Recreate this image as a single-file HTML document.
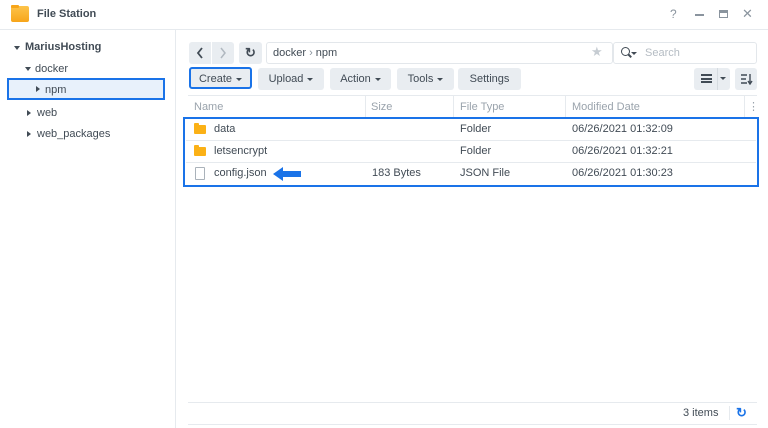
<!DOCTYPE html>
<html><head><style>
*{box-sizing:border-box;margin:0;padding:0}
body{width:768px;height:428px;background:#fff;font-family:"Liberation Sans",sans-serif;font-size:11px;color:#414b55;position:relative;overflow:hidden}
.a{position:absolute}
.btn{position:absolute;background:#e9edf1;border-radius:3px;height:22px;line-height:22px;text-align:center;font-size:11px;color:#414b55}
.car{display:inline-block;width:0;height:0;border-left:3px solid transparent;border-right:3px solid transparent;border-top:3px solid #414b55;vertical-align:middle;margin-left:4px}
.hl{position:absolute;height:1px;background:#e6eaee}
.vl{position:absolute;width:1px;background:#e6eaee}
.fold{position:absolute;width:12px;height:9px;background:#fbb116;border-radius:1px}
.fold:before{content:"";position:absolute;left:0;top:-2px;width:5px;height:3px;background:#fbb116;border-radius:1px 1px 0 0}
.tri{position:absolute;width:0;height:0}
</style></head><body>
<div class="a" style="left:11px;top:6px;width:18px;height:16px;background:linear-gradient(#fdc44a,#f7a51a);border-radius:2px"></div>
<div class="a" style="left:11px;top:5px;width:8px;height:3px;background:#f7a51a;border-radius:1px"></div>
<div class="a" style="left:37px;top:8px;font-weight:bold;font-size:11px;color:#414b55">File Station</div>
<div class="a" style="left:670px;top:7px;font-size:12px;color:#8a949e">?</div>
<div class="a" style="left:695px;top:14px;width:9px;height:2px;background:#8a949e"></div>
<div class="a" style="left:719px;top:10px;width:9px;height:8px;border:1.5px solid #8a949e;border-top-width:3px"></div>
<div class="a" style="left:742px;top:6px;font-size:13px;color:#8a949e">✕</div>
<div class="hl" style="left:0;top:29px;width:768px"></div>
<div class="vl" style="left:175px;top:30px;height:398px"></div>
<div class="tri" style="left:14px;top:46px;border-left:3px solid transparent;border-right:3px solid transparent;border-top:4px solid #414b55"></div>
<div class="a" style="left:25px;top:41px;font-weight:bold;color:#414b55">MariusHosting</div>
<div class="tri" style="left:25px;top:67px;border-left:3px solid transparent;border-right:3px solid transparent;border-top:4px solid #414b55"></div>
<div class="a" style="left:35px;top:63px">docker</div>
<div class="a" style="left:7px;top:78px;width:158px;height:22px;background:#e8f1fb;border:2px solid #1a73e8"></div>
<div class="tri" style="left:36px;top:86px;border-top:3px solid transparent;border-bottom:3px solid transparent;border-left:4px solid #414b55"></div>
<div class="a" style="left:45px;top:84px">npm</div>
<div class="tri" style="left:27px;top:110px;border-top:3px solid transparent;border-bottom:3px solid transparent;border-left:4px solid #414b55"></div>
<div class="a" style="left:37px;top:107px">web</div>
<div class="tri" style="left:27px;top:131px;border-top:3px solid transparent;border-bottom:3px solid transparent;border-left:4px solid #414b55"></div>
<div class="a" style="left:37px;top:128px">web_packages</div>
<div class="btn" style="left:189px;top:42px;width:45px"></div>
<div class="vl" style="left:211px;top:42px;height:22px;background:#fff"></div>
<svg class="a" style="left:196px;top:47px" width="8" height="12"><path d="M6 1 L2 6 L6 11" stroke="#414b55" stroke-width="1.8" fill="none"/></svg>
<svg class="a" style="left:219px;top:47px" width="8" height="12"><path d="M2 1 L6 6 L2 11" stroke="#b0b8c0" stroke-width="1.5" fill="none"/></svg>
<div class="btn" style="left:239px;top:42px;width:23px;font-size:13px;font-weight:bold">↻</div>
<div class="a" style="left:266px;top:42px;width:347px;height:22px;border:1px solid #e3e7eb;border-radius:3px"></div>
<div class="a" style="left:273px;top:47px">docker <span style="color:#8a949e">›</span> npm</div>
<div class="a" style="left:591px;top:44px;font-size:13px;color:#c6ccd2">★</div>
<div class="a" style="left:613px;top:42px;width:144px;height:22px;border:1px solid #e3e7eb;border-radius:3px"></div>
<div class="a" style="left:621px;top:47px;width:9px;height:9px;border:1.5px solid #414b55;border-radius:50%"></div>
<div class="a" style="left:628px;top:55px;width:4px;height:1.5px;background:#414b55;transform:rotate(45deg)"></div>
<div class="car" style="position:absolute;left:631px;top:52px;margin:0"></div>
<div class="a" style="left:645px;top:47px;color:#b5bcc3">Search</div>
<div class="btn" style="left:189px;top:67px;width:63px;border:2px solid #1a73e8;line-height:20px">Create<span class="car"></span></div>
<div class="btn" style="left:258px;top:68px;width:66px">Upload<span class="car"></span></div>
<div class="btn" style="left:330px;top:68px;width:61px">Action<span class="car"></span></div>
<div class="btn" style="left:397px;top:68px;width:57px">Tools<span class="car"></span></div>
<div class="btn" style="left:458px;top:68px;width:63px">Settings</div>
<div class="btn" style="left:694px;top:68px;width:36px"></div>
<div class="vl" style="left:717px;top:68px;height:22px;background:#d5dbe0"></div>
<div class="a" style="left:701px;top:74px;width:11px;height:9px;border-top:2px solid #414b55;border-bottom:2px solid #414b55"></div>
<div class="a" style="left:701px;top:78px;width:11px;height:2px;background:#414b55"></div>
<div class="car" style="position:absolute;left:720px;top:77px;margin:0"></div>
<div class="btn" style="left:735px;top:68px;width:22px"></div>
<svg class="a" style="left:740px;top:73px" width="13" height="12"><path d="M1 2H7M1 6H6M1 10H7" stroke="#414b55" stroke-width="1.4"/><path d="M10 1V10M8 8L10 11L12 8" stroke="#414b55" stroke-width="1.4" fill="none"/></svg>
<div class="hl" style="left:188px;top:95px;width:569px"></div>
<div class="a" style="left:194px;top:101px;color:#9aa3ac">Name</div>
<div class="a" style="left:371px;top:101px;color:#9aa3ac">Size</div>
<div class="a" style="left:460px;top:101px;color:#9aa3ac">File Type</div>
<div class="a" style="left:572px;top:101px;color:#9aa3ac">Modified Date</div>
<div class="a" style="left:748px;top:100px;color:#9aa3ac">⋮</div>
<div class="vl" style="left:365px;top:96px;height:21px"></div>
<div class="vl" style="left:453px;top:96px;height:21px"></div>
<div class="vl" style="left:565px;top:96px;height:21px"></div>
<div class="vl" style="left:744px;top:96px;height:21px"></div>
<div class="a" style="left:183px;top:117px;width:576px;height:70px;border:2px solid #1a73e8"></div>
<div class="hl" style="left:186px;top:140px;width:570px"></div>
<div class="hl" style="left:186px;top:162px;width:570px"></div>
<div class="fold" style="left:194px;top:125px"></div>
<div class="a" style="left:214px;top:123px">data</div>
<div class="a" style="left:460px;top:123px">Folder</div>
<div class="a" style="left:572px;top:123px">06/26/2021 01:32:09</div>
<div class="fold" style="left:194px;top:147px"></div>
<div class="a" style="left:214px;top:145px">letsencrypt</div>
<div class="a" style="left:460px;top:145px">Folder</div>
<div class="a" style="left:572px;top:145px">06/26/2021 01:32:21</div>
<div class="a" style="left:195px;top:167px;width:10px;height:13px;border:1px solid #aab2ba;border-radius:1px"></div>
<div class="a" style="left:214px;top:167px">config.json</div>
<svg class="a" style="left:272px;top:166px" width="30" height="16"><path d="M1 8 L11 1 L11 5 L29 5 L29 11 L11 11 L11 15 Z" fill="#1a73e8"/></svg>
<div class="a" style="left:372px;top:167px">183 Bytes</div>
<div class="a" style="left:460px;top:167px">JSON File</div>
<div class="a" style="left:572px;top:167px">06/26/2021 01:30:23</div>
<div class="hl" style="left:188px;top:402px;width:569px"></div>
<div class="hl" style="left:188px;top:424px;width:569px"></div>
<div class="a" style="left:683px;top:407px">3 items</div>
<div class="vl" style="left:729px;top:406px;height:14px"></div>
<div class="a" style="left:736px;top:405px;font-size:13px;font-weight:bold;color:#1a73e8">↻</div>
</body></html>
